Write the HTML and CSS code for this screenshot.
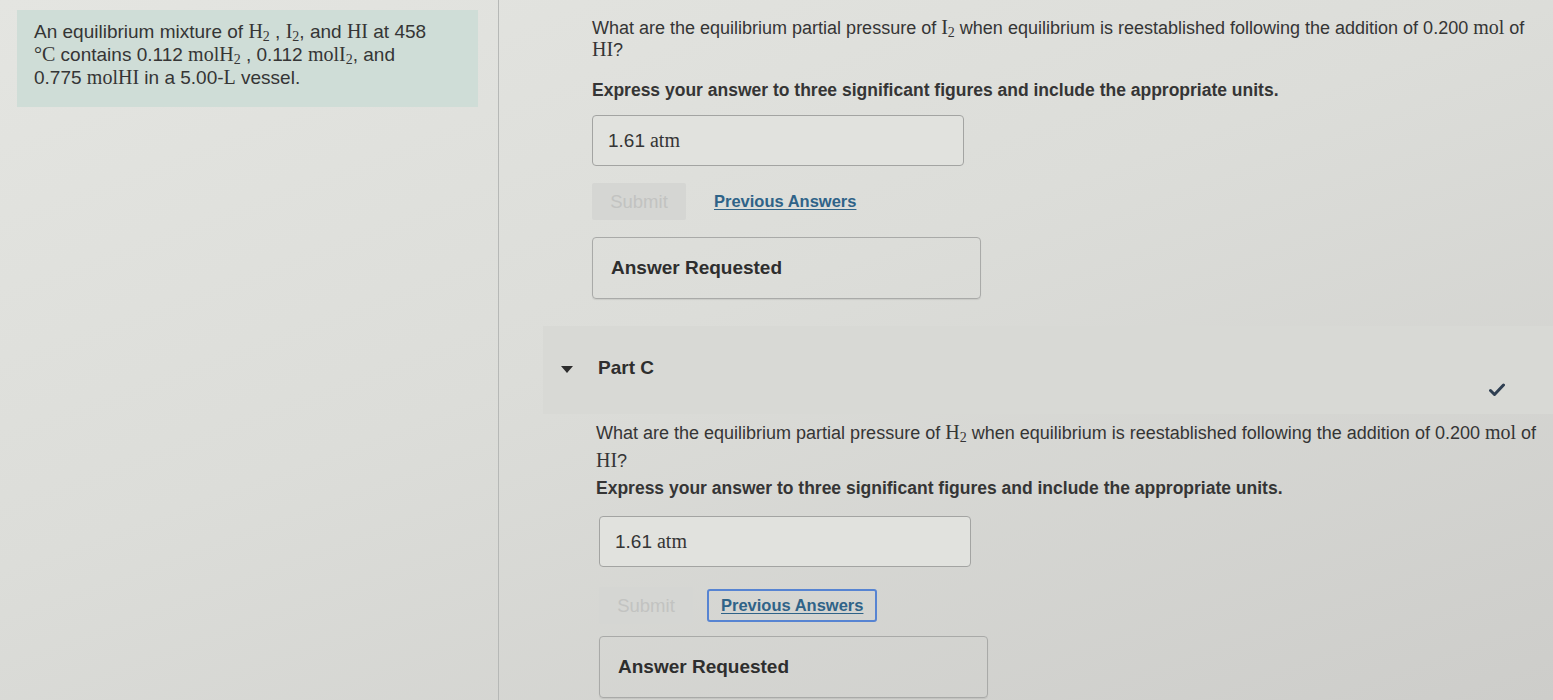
FILE: index.html
```html
<!DOCTYPE html>
<html lang="en">
<head>
<meta charset="utf-8">
<title>Equilibrium problem</title>
<link rel="stylesheet" href="styles.css">
</head>
<body>
<div class="page">
  <aside class="left">
    <div class="intro">
      An equilibrium mixture of <span class="m">H<sub>2</sub></span> , <span class="m">I<sub>2</sub></span>, and <span class="m">HI</span> at 458 <span class="m">°C</span> contains 0.112 <span class="m">molH<sub>2</sub></span> , 0.112 <span class="m">molI<sub>2</sub></span>, and 0.775 <span class="m">molHI</span> in a 5.00-<span class="m">L</span> vessel.
    </div>
  </aside>
  <main class="right">
    <section class="part">
      <p class="question">What are the equilibrium partial pressure of <span class="m">I<sub>2</sub></span> when equilibrium is reestablished following the addition of 0.200 <span class="m">mol</span> of <span class="m">HI</span>?</p>
      <p class="instr">Express your answer to three significant figures and include the appropriate units.</p>
      <div class="answer-input">1.61 <span class="m">atm</span></div>
      <div class="actions">
        <button class="submit">Submit</button>
        <a class="prev">Previous Answers</a>
      </div>
      <div class="requested">Answer Requested</div>
    </section>

    <div class="part-header">
      <span class="caret"></span>
      <span class="part-title">Part C</span>
      <svg class="check" width="16" height="14" viewBox="0 0 16 14"><path d="M1.5 7.5 L5.5 11.5 L14.5 2" fill="none" stroke="#2f3f52" stroke-width="3" stroke-linecap="round" stroke-linejoin="round"/></svg>
    </div>

    <section class="part part-c">
      <p class="question">What are the equilibrium partial pressure of <span class="m">H<sub>2</sub></span> when equilibrium is reestablished following the addition of 0.200 <span class="m">mol</span> of <span class="m">HI</span>?</p>
      <p class="instr">Express your answer to three significant figures and include the appropriate units.</p>
      <div class="answer-input">1.61 <span class="m">atm</span></div>
      <div class="actions">
        <button class="submit">Submit</button>
        <a class="prev focused">Previous Answers</a>
      </div>
      <div class="requested">Answer Requested</div>
    </section>
  </main>
</div>
</body>
</html>
```

FILE: styles.css
```css
html, body {
  margin: 0;
  padding: 0;
}
body {
  width: 1553px;
  height: 700px;
  overflow: hidden;
  background: linear-gradient(160deg, #e4e5e1 0%, #dcddd9 45%, #cdcdca 100%);
  font-family: "Liberation Sans", Arial, sans-serif;
  font-size: 18px;
  color: #353535;
}
.page {
  display: flex;
  height: 700px;
}
.left {
  width: 498px;
  flex: none;
  border-right: 1px solid #b6b8b6;
}
.intro {
  margin: 10px 20px 0 17px;
  padding: 10px 32px 18px 17px;
  background: #cfddd7;
  font-size: 19px;
  line-height: 23px;
}
.m {
  font-family: "Liberation Serif", "Times New Roman", serif;
  font-size: 20px;
}
.intro .m {
  font-size: 20px;
}
sub {
  font-size: 14px;
  vertical-align: -3px;
  line-height: 0;
}
.right {
  flex: 1;
  padding-left: 44px;
}
.part {
  padding-left: 49px;
  padding-right: 20px;
}
.question {
  margin: 0;
  padding-top: 17px;
  line-height: 21px;
  max-width: 935px;
}
.instr {
  margin: 19px 0 0;
  font-weight: bold;
  font-size: 17.5px;
  line-height: 21px;
}
.answer-input {
  margin-top: 14px;
  width: 372px;
  height: 51px;
  box-sizing: border-box;
  padding: 0 15px;
  border: 1px solid #a3a4a2;
  border-radius: 4px;
  display: flex;
  align-items: center;
  gap: 5px;
  font-size: 19px;
  background: #e1e2de;
}
.actions {
  margin-top: 17px;
  display: flex;
  align-items: center;
}
.submit {
  width: 94px;
  height: 37px;
  border: none;
  background: #d5d6d3;
  color: #c2c3c1;
  font-family: "Liberation Sans", Arial, sans-serif;
  font-size: 18.5px;
  padding: 0;
  border-radius: 2px;
}
.prev {
  margin-left: 14px;
  padding: 5px 12px;
  border: 2px solid transparent;
  border-radius: 3px;
  color: #2f6388;
  font-weight: bold;
  font-size: 16.5px;
  text-decoration: underline;
  text-underline-offset: 2px;
}
.prev.focused {
  border-color: #5784d2;
}
.requested {
  margin-top: 17px;
  width: 389px;
  height: 62px;
  box-sizing: border-box;
  border: 1px solid #a9aaa8;
  border-radius: 4px;
  display: flex;
  align-items: center;
  padding-left: 18px;
  font-weight: bold;
  font-size: 19px;
  color: #2e2e2e;
  box-shadow: 0 1px 1px rgba(0,0,0,0.08);
}
.part-header {
  position: relative;
  margin-top: 27px;
  height: 88px;
  background: #d8d9d5;
  display: flex;
  align-items: center;
  padding-left: 18px;
  padding-bottom: 4px;
  box-sizing: border-box;
}
.caret {
  width: 0;
  height: 0;
  border-left: 6px solid transparent;
  border-right: 6px solid transparent;
  border-top: 7px solid #2d2d2d;
  margin-top: 2px;
}
.part-title {
  margin-left: 25px;
  font-weight: bold;
  font-size: 19px;
  color: #2e2e2e;
}
.check {
  position: absolute;
  right: 48px;
  bottom: 17px;
}
.part-c {
  padding-left: 53px;
  padding-right: 8px;
}
.part-c .question {
  padding-top: 5px;
  line-height: 27px;
  max-width: 948px;
}
.part-c .instr {
  margin-top: 2px;
  line-height: 22px;
}
.part-c .answer-input {
  margin-top: 17px;
}
.part-c .actions {
  margin-top: 20px;
}
.part-c .requested {
  margin-top: 12px;
}
.part-c .answer-input,
.part-c .requested,
.part-c .actions {
  margin-left: 3px;
}
```
